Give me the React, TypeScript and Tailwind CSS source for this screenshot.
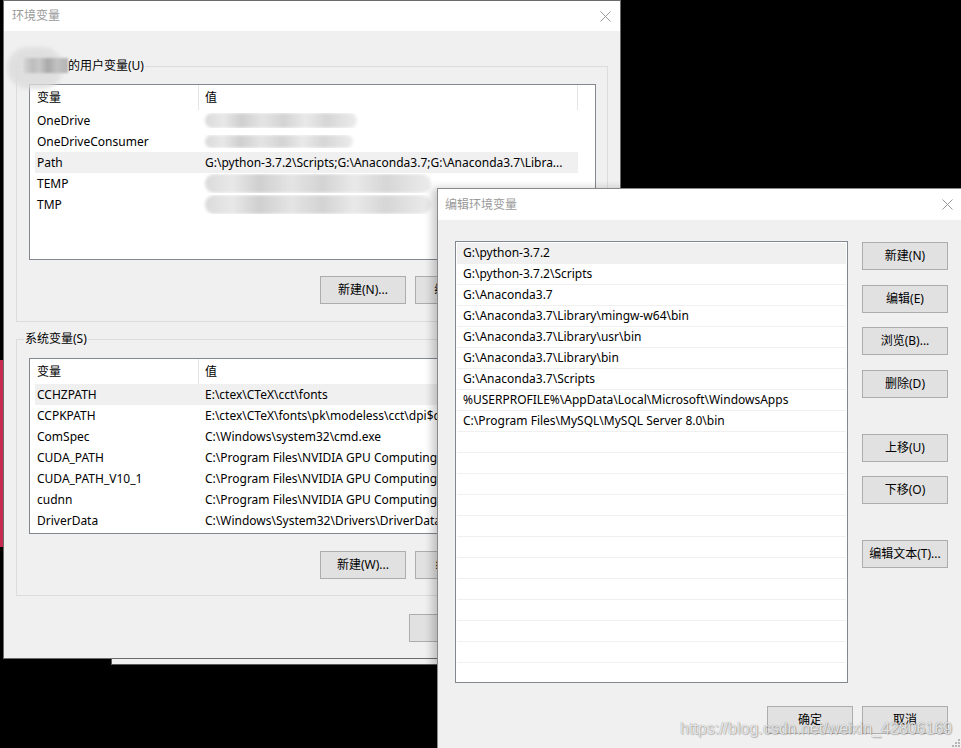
import React from 'react'

const UI_FONT = "font-['Noto_Sans','Noto_Sans_CJK_SC',sans-serif]"

type VarRow = { name: string; value?: string; blur?: string; selected?: boolean }

const userVars: VarRow[] = [
  { name: 'OneDrive', blur: 'w-[152px] h-[15px]' },
  { name: 'OneDriveConsumer', blur: 'w-[148px] h-[13px]' },
  { name: 'Path', value: 'G:\\python-3.7.2\\Scripts;G:\\Anaconda3.7;G:\\Anaconda3.7\\Libra...', selected: true },
  { name: 'TEMP', blur: 'w-[226px] h-[19px]' },
  { name: 'TMP', blur: 'w-[226px] h-[19px]' },
]

const systemVars: VarRow[] = [
  { name: 'CCHZPATH', value: 'E:\\ctex\\CTeX\\cct\\fonts', selected: true },
  { name: 'CCPKPATH', value: 'E:\\ctex\\CTeX\\fonts\\pk\\modeless\\cct\\dpi$dpi' },
  { name: 'ComSpec', value: 'C:\\Windows\\system32\\cmd.exe' },
  { name: 'CUDA_PATH', value: 'C:\\Program Files\\NVIDIA GPU Computing Toolkit\\CUDA\\v10.1' },
  { name: 'CUDA_PATH_V10_1', value: 'C:\\Program Files\\NVIDIA GPU Computing Toolkit\\CUDA\\v10.1' },
  { name: 'cudnn', value: 'C:\\Program Files\\NVIDIA GPU Computing Toolkit\\CUDA\\v10.1\\bin' },
  { name: 'DriverData', value: 'C:\\Windows\\System32\\Drivers\\DriverData' },
]

const pathEntries = [
  'G:\\python-3.7.2',
  'G:\\python-3.7.2\\Scripts',
  'G:\\Anaconda3.7',
  'G:\\Anaconda3.7\\Library\\mingw-w64\\bin',
  'G:\\Anaconda3.7\\Library\\usr\\bin',
  'G:\\Anaconda3.7\\Library\\bin',
  'G:\\Anaconda3.7\\Scripts',
  '%USERPROFILE%\\AppData\\Local\\Microsoft\\WindowsApps',
  'C:\\Program Files\\MySQL\\MySQL Server 8.0\\bin',
]

const CloseX = () => (
  <svg width="11" height="11" viewBox="0 0 11 11" className="shrink-0">
    <path d="M0.5 0.5 L10.5 10.5 M10.5 0.5 L0.5 10.5" stroke="#999" strokeWidth="1" fill="none" />
  </svg>
)

const WinButton = ({ label, className = '' }: { label: string; className?: string }) => (
  <div className={`flex h-[28px] w-[86px] shrink-0 items-center justify-center border border-[#adadad] bg-[#e1e1e1] text-[12px] text-black ${className}`}>
    {label}
  </div>
)

// pixelated grey smear standing in for the masked values
const Smear = ({ size }: { size: string }) => (
  <span className={`inline-block rounded-full blur-[1.5px] bg-[linear-gradient(90deg,#dadada_0%,#e8e8e8_12%,#cfcfcf_24%,#e4e4e4_38%,#d3d3d3_52%,#e9e9e9_66%,#d6d6d6_80%,#ececec_100%)] ${size}`} />
)

const VarList = ({ rows }: { rows: VarRow[] }) => (
  <div className="h-[176px] w-[567px] overflow-hidden border border-[#828790] bg-white">
    <div className="ml-[5px] flex h-[25px] w-[543px]">
      <div className="flex w-[164px] items-center border-r border-[#e5e5e5] pl-[2px]">变量</div>
      <div className="flex flex-1 items-center border-r border-[#e5e5e5] pl-[6px]">值</div>
    </div>
    {rows.map((row) => (
      <div key={row.name} className={`ml-[5px] flex h-[21px] w-[543px] items-center whitespace-nowrap ${row.selected ? 'bg-[#f0f0f0]' : ''}`}>
        <div className="w-[164px] shrink-0 overflow-hidden pl-[2px]">{row.name}</div>
        <div className="flex flex-1 items-center overflow-hidden pl-[6px]">
          {row.blur ? <Smear size={row.blur} /> : row.value}
        </div>
      </div>
    ))}
  </div>
)

const GroupBox = ({ label, labelLeft, rows, newLabel, editLabel }: { label: string; labelLeft: string; rows: VarRow[]; newLabel: string; editLabel: string }) => (
  <div className="relative ml-[12px] w-[592px] border border-[#dcdcdc] pl-[12px] pr-[11px]">
    <div className={`absolute -top-[9px] bg-[#f0f0f0] px-[1px] leading-[16px] ${labelLeft}`}>{label}</div>
    {rows.length > 0 && null}
    <div className="pt-[17px]">
      <VarList rows={rows} />
    </div>
    <div className="mt-[16px] mb-[17px] flex justify-end gap-[9px]">
      <WinButton label={newLabel} />
      <WinButton label={editLabel} />
      <WinButton label="删除(D)" />
    </div>
  </div>
)

export default function App() {
  return (
    <div className={`relative h-[748px] w-[961px] overflow-hidden bg-black text-[12px] text-black ${UI_FONT}`}>
      {/* window further back, only its lower edge shows */}
      <div className="absolute left-[111px] top-[600px] h-[65px] w-[340px] border border-[#5a5a5a] bg-[#f0f0f0]" />

      {/* pink strip of the desktop at the far left */}
      <div className="absolute left-0 top-[360px] h-[187px] w-[3px] bg-[#c72a4f]" />

      {/* 环境变量 */}
      <div className="absolute left-[3px] top-0 flex h-[659px] w-[618px] flex-col border border-[#6b6b6b] bg-[#f0f0f0]">
        <div className="flex h-[30px] shrink-0 items-center bg-white pl-[8px] text-[#9a9a9a]">
          <span>环境变量</span>
          <span className="ml-auto mr-[9px]"><CloseX /></span>
        </div>

        <div className="mt-[35px]">
          <div className="relative ml-[12px] w-[592px] border border-[#dcdcdc] pl-[12px] pr-[11px]">
            <div className="absolute -top-[9px] left-[50px] bg-[#f0f0f0] px-[1px] leading-[16px]">的用户变量(U)</div>
            <div className="pt-[17px]">
              <VarList rows={userVars} />
            </div>
            <div className="mb-[17px] mt-[16px] flex justify-end gap-[9px]">
              <WinButton label="新建(N)..." />
              <WinButton label="编辑(E)..." />
              <WinButton label="删除(D)" />
            </div>
          </div>
        </div>

        <div className="mt-[17px]">
          <div className="relative ml-[12px] w-[592px] border border-[#dcdcdc] pl-[12px] pr-[11px]">
            <div className="absolute -top-[9px] left-[7px] bg-[#f0f0f0] px-[1px] leading-[16px]">系统变量(S)</div>
            <div className="pt-[18px]">
              <VarList rows={systemVars} />
            </div>
            <div className="mb-[16px] mt-[17px] flex justify-end gap-[9px]">
              <WinButton label="新建(W)..." />
              <WinButton label="编辑(I)..." />
              <WinButton label="删除(L)" />
            </div>
          </div>
        </div>

        <div className="mt-[18px] flex gap-[9px] pl-[405px]">
          <WinButton label="确定" />
          <WinButton label="取消" />
        </div>

        {/* masked avatar / user name */}
        <div className="absolute left-[3px] top-[46px] h-[42px] w-[56px] rounded-full bg-[#dcdcdc] opacity-80 blur-[2px]" />
        <div className="absolute left-[20px] top-[57px] h-[15px] w-[44px] blur-[1px] bg-[linear-gradient(90deg,#d4d4d4_0%,#bdbdbd_20%,#c8c8c8_35%,#a9a9a9_55%,#c2c2c2_75%,#b3b3b3_100%)]" />
      </div>

      {/* 编辑环境变量 */}
      <div className="absolute left-[437px] top-[188px] flex h-[570px] w-[530px] flex-col border border-[#8a8a8a] bg-[#f0f0f0] shadow-[-5px_0_8px_rgba(0,0,0,0.2)]">
        <div className="flex h-[31px] shrink-0 items-center bg-white pl-[7px] text-[#9a9a9a]">
          <span>编辑环境变量</span>
          <span className="ml-auto mr-[13px]"><CloseX /></span>
        </div>

        <div className="flex pl-[17px] pt-[21px]">
          <div className="h-[442px] w-[393px] overflow-hidden border border-[#828790] bg-white p-[1px]">
            {Array.from({ length: 21 }).map((_, i) => (
              <div
                key={i}
                className={`flex h-[21px] items-center whitespace-nowrap border-b border-[#f0f0f0] pl-[6px] ${i === 0 ? 'bg-[#f0f0f0]' : ''}`}
              >
                {pathEntries[i] ?? ''}
              </div>
            ))}
          </div>

          <div className="ml-[14px] flex flex-col pt-[1px]">
            <WinButton label="新建(N)" />
            <WinButton label="编辑(E)" className="mt-[15px]" />
            <WinButton label="浏览(B)..." className="mt-[14px]" />
            <WinButton label="删除(D)" className="mt-[15px]" />
            <WinButton label="上移(U)" className="mt-[36px]" />
            <WinButton label="下移(O)" className="mt-[14px]" />
            <WinButton label="编辑文本(T)..." className="mt-[36px]" />
          </div>
        </div>

        <div className="mt-[23px] flex gap-[9px] pl-[329px]">
          <WinButton label="确定" />
          <WinButton label="取消" />
        </div>
      </div>

      {/* blog watermark */}
      <div className="absolute left-[680px] top-[720px] whitespace-nowrap font-['Liberation_Sans',Arial,sans-serif] text-[16px] leading-[18px] text-[rgba(255,255,255,0.8)] [text-shadow:0_0_1px_rgba(0,0,0,0.45),1px_1px_1px_rgba(0,0,0,0.2)]">
        https://blog.csdn.net/weixin_42806169
      </div>

      {/* resize grip */}
      <svg className="absolute left-[952px] top-[739px]" width="9" height="9" viewBox="0 0 9 9">
        <rect x="6" y="0" width="2" height="2" fill="#b5b5b5" />
        <rect x="3" y="3" width="2" height="2" fill="#b5b5b5" />
        <rect x="6" y="3" width="2" height="2" fill="#b5b5b5" />
        <rect x="0" y="6" width="2" height="2" fill="#b5b5b5" />
        <rect x="3" y="6" width="2" height="2" fill="#b5b5b5" />
        <rect x="6" y="6" width="2" height="2" fill="#b5b5b5" />
      </svg>
    </div>
  )
}
